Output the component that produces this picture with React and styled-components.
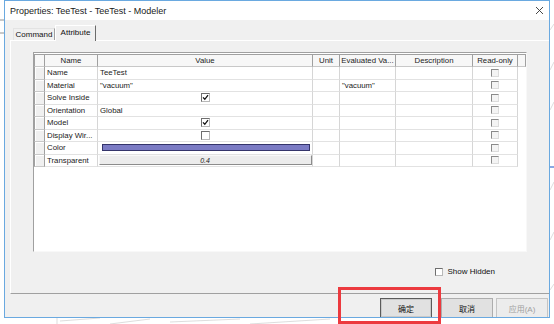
import React from "react";
import styled, { createGlobalStyle } from "styled-components";

const GlobalStyle = createGlobalStyle`
  html, body {
    margin: 0;
    padding: 0;
    background: #ffffff;
  }
  body {
    width: 554px;
    height: 324px;
    overflow: hidden;
    position: relative;
    font-family: "Liberation Sans", "Noto Sans CJK SC", sans-serif;
  }
`;

const Page = styled.div`
  width: 554px;
  height: 324px;
  padding-left: 4px;
  box-sizing: border-box;
  position: relative;
`;

// faint CAD lines of the modeler behind the dialog
const Backdrop = styled.svg`
  position: absolute;
  left: 0;
  top: 0;
  width: 554px;
  height: 324px;
`;

const Window = styled.div`
  position: relative;
  width: 546px;
  height: 318px;
  box-sizing: border-box;
  border: 1px solid #6aa9e0;
  display: flex;
  flex-direction: column;
  overflow: hidden;
  background: #f0f0f0;
`;

const TitleBar = styled.div`
  height: 19px;
  flex: none;
  background: #ffffff;
  display: flex;
  align-items: center;
  justify-content: space-between;
  padding: 0 5px 0 5px;
  font-size: 9px;
  color: #1a1a1a;
`;

const CloseBtn = styled.svg`
  width: 9px;
  height: 9px;
`;

const Body = styled.div`
  height: 297px;
  display: flex;
  flex-direction: column;
`;

const TabStrip = styled.div`
  height: 20px;
  flex: none;
  display: flex;
  align-items: flex-end;
  padding-left: 8px;
  position: relative;
  z-index: 1;
`;

const Tab = styled.div`
  box-sizing: border-box;
  width: ${(p) => (p.$active ? "41px" : "42px")};
  height: ${(p) => (p.$active ? "16px" : "12px")};
  margin-bottom: ${(p) => (p.$active ? "-1px" : "0")};
  border-top: 1px solid ${(p) => (p.$active ? "#ffffff" : "#e3e3e3")};
  border-left: 1px solid ${(p) => (p.$active ? "#ffffff" : "#e3e3e3")};
  border-right: 1px solid ${(p) => (p.$active ? "#6b6b6b" : "#a0a0a0")};
  background: #f0f0f0;
  font-size: 8px;
  color: #111;
  display: flex;
  align-items: ${(p) => (p.$active ? "flex-start" : "center")};
  padding-top: ${(p) => (p.$active ? "2px" : "0")};
  justify-content: center;
`;

const Panel = styled.div`
  height: 254px;
  box-sizing: border-box;
  margin-left: 5px;
  border-top: 1px solid #ffffff;
  border-left: 1px solid #ffffff;
  border-bottom: 1px solid #a0a0a0;
  padding: 11px 0 0 22px;
  display: flex;
  flex-direction: column;
`;

const GridBox = styled.div`
  width: 494px;
  height: 200px;
  box-sizing: border-box;
  background: #ffffff;
  border-top: 1px solid #a0a0a0;
  border-left: 1px solid #a0a0a0;
  border-right: 1px solid #f8f8f8;
  border-bottom: 1px solid #f8f8f8;
  padding-top: 1px;
`;

const COLS = [11, 53, 215, 27, 56, 77, 45];

const HeaderRow = styled.div`
  display: grid;
  grid-template-columns: ${COLS.map((c) => c + "px").join(" ")} 8px;
  height: 13px;
`;

const BodyRow = styled.div`
  display: grid;
  grid-template-columns: ${COLS.map((c) => c + "px").join(" ")};
  height: 12.5px;
`;

const HeadCell = styled.div`
  box-sizing: border-box;
  background: #f7f7f7;
  border-top: 1px solid #a0a0a0;
  border-right: 1px solid #a0a0a0;
  border-bottom: 1px solid #c8c8c8;
  ${(p) => p.$first && "border-left: 1px solid #a0a0a0;"}
  font-size: 7.8px;
  color: #222;
  display: flex;
  align-items: center;
  justify-content: center;
  white-space: nowrap;
  overflow: hidden;
`;

const RowHead = styled.div`
  box-sizing: border-box;
  background: #f0f0f0;
  border-left: 1px solid #a0a0a0;
  border-right: 1px solid #a0a0a0;
  border-bottom: 1px solid #c8c8c8;
  box-shadow: inset 1px 1px 0 #ffffff;
`;

const Cell = styled.div`
  box-sizing: border-box;
  border-right: 1px solid #d6d6d6;
  border-bottom: 1px solid #e2e2e2;
  font-size: 7.8px;
  color: #222;
  display: flex;
  align-items: center;
  justify-content: ${(p) => (p.$center ? "center" : "flex-start")};
  padding-left: ${(p) => (p.$center ? "0" : "2px")};
  white-space: nowrap;
  overflow: hidden;
`;

const Check = styled.div`
  box-sizing: border-box;
  width: ${(p) => (p.$small ? "8px" : "9px")};
  height: ${(p) => (p.$small ? "8px" : "9px")};
  background: ${(p) => (p.$disabled ? "#f4f4f4" : "#ffffff")};
  border-top: 1px solid ${(p) => (p.$disabled ? "#8a8a8a" : "#6e6e6e")};
  border-left: 1px solid ${(p) => (p.$disabled ? "#8a8a8a" : "#6e6e6e")};
  border-right: 1px solid ${(p) => (p.$disabled ? "#dcdcdc" : "#b8b8b8")};
  border-bottom: 1px solid ${(p) => (p.$disabled ? "#dcdcdc" : "#b8b8b8")};
  display: flex;
  align-items: center;
  justify-content: center;
`;

const ColorBar = styled.div`
  width: 208px;
  height: 7px;
  margin-left: 2px;
  box-sizing: border-box;
  background: #7b7bc4;
  border: 1px solid #34346a;
`;

const SpinBar = styled.div`
  width: 213px;
  height: 10px;
  box-sizing: border-box;
  background: #ececec;
  border-top: 1px solid #f8f8f8;
  border-left: 1px solid #f8f8f8;
  border-right: 1px solid #8c8c8c;
  border-bottom: 1px solid #8c8c8c;
  font-size: 7px;
  color: #222;
  display: flex;
  align-items: center;
  justify-content: center;
  font-style: italic;
`;

const HiddenRow = styled.div`
  display: flex;
  justify-content: flex-end;
  align-items: center;
  gap: 4px;
  margin-top: 15px;
  margin-right: 54px;
  font-size: 8px;
  color: #111;
`;

const Footer = styled.div`
  height: 23px;
  display: flex;
  justify-content: flex-end;
  align-items: flex-start;
  padding-top: 4px;
  padding-right: 1px;
  box-sizing: border-box;
`;

const Button = styled.div`
  box-sizing: border-box;
  width: ${(p) => p.$w || 52}px;
  height: 20px;
  margin-left: ${(p) => p.$gap || 0}px;
  flex: none;
  background: #e1e1e1;
  border: 1px solid ${(p) => (p.$default ? "#5a5a5a" : "#adadad")};
  ${(p) => p.$default && "box-shadow: inset 0 0 0 1px #c9c9c9;"}
  font-size: 8px;
  color: ${(p) => (p.$disabled ? "#a0a0a0" : "#111")};
  display: flex;
  align-items: center;
  justify-content: center;
  ${(p) => p.$disabled && "background: #ececec; border-color: #c4c4c4;"}
`;

const Highlight = styled.div`
  position: absolute;
  left: 338px;
  top: 287px;
  width: 103px;
  height: 37px;
  box-sizing: border-box;
  border: 3px solid #ec3a3f;
  pointer-events: none;
`;

const Tick = () => (
  <svg width="7" height="7" viewBox="0 0 7 7">
    <path d="M1 3.4 L2.8 5.3 L6 1.2" fill="none" stroke="#111" strokeWidth="1.3" />
  </svg>
);

const rows = [
  { name: "Name", value: "TeeTest" },
  { name: "Material", value: "\"vacuum\"", evaluated: "\"vacuum\"" },
  { name: "Solve Inside", check: true },
  { name: "Orientation", value: "Global" },
  { name: "Model", check: true },
  { name: "Display Wir...", check: false },
  { name: "Color", color: true },
  { name: "Transparent", spin: "0.4" },
];

const headers = ["Name", "Value", "Unit", "Evaluated Va...", "Description", "Read-only"];

export default function App() {
  return (
    <>
      <GlobalStyle />
      <Page>
        <Backdrop viewBox="0 0 554 324">
          <g stroke="#d4d4d4" strokeWidth="0.8" fill="none">
            <path d="M0 20 H4 M0 33 H4" stroke="#777" />
            <path d="M57 318 V324 M60 321 L100 318 M110 324 L150 319 M170 322 L240 319 M250 324 L330 319" />
            <path d="M550 30 L554 24 M550 70 L554 62 M550 110 L554 102 M550 190 L554 182 M550 240 L554 232 M550 290 L554 284" />
            <path d="M549 167 H554" stroke="#3b6fd0" strokeWidth="1.2" />
          </g>
        </Backdrop>
        <Window>
          <TitleBar>
            <span>Properties: TeeTest - TeeTest - Modeler</span>
            <CloseBtn viewBox="0 0 9 9">
              <path d="M1 1 L8 8 M8 1 L1 8" stroke="#333" strokeWidth="0.9" />
            </CloseBtn>
          </TitleBar>
          <Body>
            <TabStrip>
              <Tab>Command</Tab>
              <Tab $active>Attribute</Tab>
            </TabStrip>
            <Panel>
              <GridBox>
                <HeaderRow>
                  <HeadCell $first />
                  {headers.map((h) => (
                    <HeadCell key={h}>{h}</HeadCell>
                  ))}
                  <HeadCell />
                </HeaderRow>
                {rows.map((r) => (
                  <BodyRow key={r.name}>
                    <RowHead />
                    <Cell>{r.name}</Cell>
                    <Cell $center={r.check !== undefined || r.spin}>
                      {r.value}
                      {r.check !== undefined && <Check>{r.check && <Tick />}</Check>}
                      {r.color && <ColorBar />}
                      {r.spin && <SpinBar>{r.spin}</SpinBar>}
                    </Cell>
                    <Cell />
                    <Cell>{r.evaluated}</Cell>
                    <Cell />
                    <Cell $center>
                      <Check $small $disabled />
                    </Cell>
                  </BodyRow>
                ))}
              </GridBox>
              <HiddenRow>
                <Check $small />
                <span>Show Hidden</span>
              </HiddenRow>
            </Panel>
            <Footer>
              <Button $default>确定</Button>
              <Button $gap={9}>取消</Button>
              <Button $gap={3} $disabled>应用(A)</Button>
            </Footer>
          </Body>
        </Window>
        <Highlight />
      </Page>
    </>
  );
}
